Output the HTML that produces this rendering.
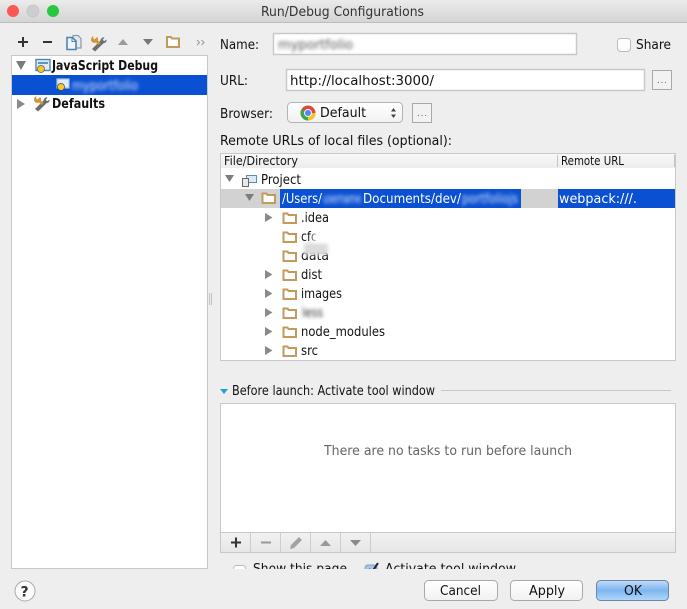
<!DOCTYPE html>
<html><head><meta charset="utf-8"><style>
html,body{margin:0;padding:0;background:#eeeeee;width:687px;height:609px;overflow:hidden}
svg{display:block;filter:blur(.3px)}
text{font-family:"DejaVu Sans","Liberation Sans",sans-serif;font-size:13px;fill:#111}
</style></head><body>
<svg width="687" height="609" viewBox="0 0 687 609" xmlns="http://www.w3.org/2000/svg">
<defs>
<linearGradient id="tb" x1="0" y1="0" x2="0" y2="1"><stop offset="0" stop-color="#ebebeb"/><stop offset="1" stop-color="#d4d4d4"/></linearGradient>
<linearGradient id="btn" x1="0" y1="0" x2="0" y2="1"><stop offset="0" stop-color="#ffffff"/><stop offset="1" stop-color="#f1f1f1"/></linearGradient>
<linearGradient id="ok" x1="0" y1="0" x2="0" y2="1"><stop offset="0" stop-color="#c4dcf7"/><stop offset=".5" stop-color="#7db5f0"/><stop offset="1" stop-color="#b4d8fa"/></linearGradient>
<linearGradient id="hd" x1="0" y1="0" x2="0" y2="1"><stop offset="0" stop-color="#f8f8f8"/><stop offset="1" stop-color="#ececec"/></linearGradient>
<linearGradient id="ft" x1="0" y1="0" x2="0" y2="1"><stop offset="0" stop-color="#f2f2f2"/><stop offset="1" stop-color="#e6e6e6"/></linearGradient>
<filter id="b1" x="-20%" y="-60%" width="140%" height="220%"><feGaussianBlur stdDeviation="1.800"/></filter>
<clipPath id="cl"><rect x="220" y="555" width="320" height="14"/></clipPath>
<g id="fd"><path d="M1.500 2.500h4l1 1.500h7.500v8H1.500z" fill="#fff" stroke="#c49a5c" stroke-width="2"/></g>
<g id="wr"><path d="M14.500 2.500l-1.800 2.300 1.500 1.500 2.300-1.800c.3 1.800-.6 3.400-2.800 3.600L5 16.500 2 14l8.500-8.500c.2-2 2-3.500 4-3z" fill="#6e6e6e"/>
<path d="M3.500 1a3.800 3.800 0 0 0-2 5.500 3.800 3.800 0 0 0 4.500 1l2.500 2.500 2-2-2.500-2.500a3.800 3.800 0 0 0-1-3.500L4.500 4.500 3 3z" fill="#d4953a"/></g>
</defs>

<rect width="687" height="609" fill="#eeeeee"/>
<!-- title bar -->
<rect width="687" height="22" fill="url(#tb)"/>
<rect y="22" width="687" height="1" fill="#bdbdbd"/>
<circle cx="13" cy="11" r="6" fill="#fc5753"/>
<circle cx="33" cy="11" r="6" fill="#cecece" stroke="#bfbfbf" stroke-width=".6"/>
<circle cx="53" cy="11" r="6" fill="#27c83f"/>
<text x="261" y="16" textLength="163" lengthAdjust="spacingAndGlyphs" style="fill:#333">Run/Debug Configurations</text>

<!-- left toolbar -->
<path d="M18 42h10M23 37v10M43 42h9" stroke="#333" stroke-width="2" fill="none"/>
<path d="M73 35.500h5l3 3v9.500h-8z" fill="#e6e9ec" stroke="#8c9aa6" stroke-width="1.200"/>
<path d="M67 37.500h5.500l3.500 3.500v8.500h-9z" fill="#eef4f9" stroke="#4f86ad" stroke-width="1.600"/>
<path d="M72 37.500v4h4" fill="none" stroke="#4f86ad" stroke-width="1"/>
<use href="#wr" x="90" y="35"/>
<path d="M118 45l5-6 5 6z" fill="#9b9b9b"/>
<path d="M143 39h10l-5 6z" fill="#777"/>
<path d="M167 37h4l1 1.500h7v8.500h-12z" fill="#fff" stroke="#c49a5c" stroke-width="2"/>
<path d="M197 40l2.500 2.500-2.500 2.500M201.500 40l2.500 2.500-2.500 2.500" stroke="#999" fill="none" stroke-width="1"/>

<!-- left list -->
<rect x="11.500" y="55.500" width="196" height="513" fill="#fff" stroke="#c8c8c8"/>
<rect x="12" y="75" width="195" height="20" fill="#0a50d2"/>
<path d="M16 61h10l-5 9z" fill="#7c7c7c"/>
<path d="M17 99v10l8-5z" fill="#8a8a8a"/>
<!-- JS icon -->
<rect x="36" y="59.500" width="14" height="11" fill="#dfeaf5" stroke="#4f86ad" stroke-width="1.400"/>
<rect x="38" y="62" width="10" height="2" fill="#5c93c0"/>
<circle cx="41" cy="69" r="3.500" fill="#f4c92e" stroke="#555" stroke-width=".7"/>
<text x="52" y="70" textLength="106" lengthAdjust="spacingAndGlyphs" font-weight="700">JavaScript Debug</text>
<rect x="57" y="79" width="12" height="9" fill="#dfeaf5" stroke="#a9c4de" stroke-width="1.200"/>
<circle cx="61" cy="87" r="3.500" fill="#f4c92e" stroke="#444" stroke-width=".7"/>
<text x="72" y="90" textLength="66" lengthAdjust="spacingAndGlyphs" style="fill:#dbe6fa" filter="url(#b1)">myportfolio</text>
<!-- wrench -->
<use href="#wr" x="33" y="95"/>
<text x="52" y="108" textLength="53" lengthAdjust="spacingAndGlyphs" font-weight="700">Defaults</text>

<!-- splitter -->
<g fill="#c2c2c2"><rect x="209" y="293" width="1" height="12"/><rect x="211" y="293" width="1" height="12"/></g>

<!-- name -->
<text x="220" y="49" textLength="39" lengthAdjust="spacingAndGlyphs">Name:</text>
<rect x="273.500" y="33.500" width="303" height="21" fill="#fff" stroke="#c9c9c9" stroke-width="1.500"/>
<text x="278" y="49" textLength="75" lengthAdjust="spacingAndGlyphs" style="fill:#555" filter="url(#b1)">myportfolio</text>
<rect x="617.500" y="38.500" width="13" height="13" rx="3" fill="#fdfdfd" stroke="#bcbcbc"/>
<text x="636" y="49" textLength="35" lengthAdjust="spacingAndGlyphs">Share</text>

<!-- url -->
<text x="220" y="85" textLength="28" lengthAdjust="spacingAndGlyphs">URL:</text>
<rect x="286.500" y="69.500" width="358" height="21" fill="#fff" stroke="#c9c9c9" stroke-width="1.500"/>
<text x="290" y="85" textLength="144" lengthAdjust="spacingAndGlyphs">http://localhost:3000/</text>
<rect x="652.500" y="70.500" width="19" height="19" fill="#f2f2f2" stroke="#a8a8a8"/>
<text x="657" y="83" style="font-size:9px;fill:#666" textLength="10">...</text>

<!-- browser -->
<text x="220" y="118" textLength="53" lengthAdjust="spacingAndGlyphs">Browser:</text>
<rect x="287.500" y="102.500" width="115" height="20" rx="4" fill="url(#btn)" stroke="#b4b4b4"/>
<circle cx="308" cy="113" r="7.500" fill="#dd4b3e"/>
<path d="M308 113l-6.500 3.800a7.500 7.500 0 0 1 0-7.600z" fill="#3aa757"/>
<path d="M301.500 116.800A7.500 7.500 0 0 0 308 120.500l3.800-7.500z" fill="#3aa757"/>
<path d="M308 113h7.500A7.500 7.500 0 0 1 308 120.500z" fill="#f5c518"/>
<circle cx="308" cy="113" r="3.500" fill="#4a8af4" stroke="#f2f2f2"/>
<text x="320" y="117" textLength="46" lengthAdjust="spacingAndGlyphs">Default</text>
<path d="M391 111.500l2.500-3.500 2.500 3.500zM391 114.500l2.500 3.500 2.500-3.500z" fill="#444"/>
<rect x="412.500" y="103.500" width="19" height="19" fill="#f2f2f2" stroke="#a8a8a8"/>
<text x="417" y="116" style="font-size:9px;fill:#666" textLength="10">...</text>

<text x="220" y="145" textLength="232" lengthAdjust="spacingAndGlyphs">Remote URLs of local files (optional):</text>

<!-- table -->
<rect x="220.500" y="153.500" width="455" height="207" fill="#fff" stroke="#c8c8c8"/>
<rect x="221" y="154" width="454" height="14" fill="url(#hd)"/>
<rect x="557" y="155" width="1" height="12" fill="#c4c4c4"/>
<rect x="674" y="155" width="1" height="12" fill="#c4c4c4"/>
<text x="224" y="165" textLength="74" lengthAdjust="spacingAndGlyphs" style="font-size:12px">File/Directory</text>
<text x="561" y="165" textLength="63" lengthAdjust="spacingAndGlyphs" style="font-size:12px">Remote URL</text>

<path d="M225 175h9l-4.500 7z" fill="#7c7c7c"/>
<rect x="246.500" y="175.500" width="10" height="7" fill="#dfeaf5" stroke="#5c8fb5"/>
<rect x="242.500" y="178.500" width="6" height="8" fill="#e8e8e8" stroke="#666"/>
<text x="261" y="184" textLength="40" lengthAdjust="spacingAndGlyphs">Project</text>

<rect x="221" y="189" width="454" height="19" fill="#d2d2d2"/>
<rect x="280" y="189" width="241" height="19" fill="#0a50d2"/>
<rect x="558" y="189" width="117" height="19" fill="#0a50d2"/>
<path d="M245 194h9l-4.500 7z" fill="#7c7c7c"/>
<use href="#fd" x="261" y="191"/>
<text x="282" y="203" textLength="40" lengthAdjust="spacingAndGlyphs" style="fill:#fff">/Users/</text>
<text x="323" y="203" textLength="38" lengthAdjust="spacingAndGlyphs" style="fill:#dbe6fa" filter="url(#b1)">username</text>
<text x="363" y="203" textLength="98" lengthAdjust="spacingAndGlyphs" style="fill:#fff">Documents/dev/</text>
<text x="462" y="203" textLength="56" lengthAdjust="spacingAndGlyphs" style="fill:#dbe6fa" filter="url(#b1)">portfoliojs</text>
<text x="559" y="203" textLength="78" lengthAdjust="spacingAndGlyphs" style="fill:#fff">webpack:///.</text>

<g fill="#8a8a8a">
<path d="M265 213v9l7.500-4.500z"/><path d="M265 270v9l7.500-4.500z"/><path d="M265 289v9l7.500-4.500z"/><path d="M265 308v9l7.500-4.500z"/><path d="M265 327v9l7.500-4.500z"/><path d="M265 346v9l7.500-4.500z"/>
</g>
<use href="#fd" x="282" y="211"/>
<use href="#fd" x="282" y="230"/>
<use href="#fd" x="282" y="249"/>
<use href="#fd" x="282" y="268"/>
<use href="#fd" x="282" y="287"/>
<use href="#fd" x="282" y="306"/>
<use href="#fd" x="282" y="325"/>
<use href="#fd" x="282" y="344"/>
<text x="301" y="222" textLength="28" lengthAdjust="spacingAndGlyphs">.idea</text>
<text x="301" y="241" textLength="16" lengthAdjust="spacingAndGlyphs">cfc</text>
<text x="301" y="260" textLength="28" lengthAdjust="spacingAndGlyphs">data</text>
<rect x="304" y="243" width="24" height="12" fill="#dcdcdc" filter="url(#b1)"/>
<rect x="313" y="233" width="16" height="9" fill="#fff" filter="url(#b1)"/>
<text x="301" y="279" textLength="21" lengthAdjust="spacingAndGlyphs">dist</text>
<text x="301" y="298" textLength="41" lengthAdjust="spacingAndGlyphs">images</text>
<text x="302" y="317" textLength="21" lengthAdjust="spacingAndGlyphs" style="fill:#333" filter="url(#b1)">less</text>
<text x="301" y="336" textLength="84" lengthAdjust="spacingAndGlyphs">node_modules</text>
<text x="301" y="355" textLength="17" lengthAdjust="spacingAndGlyphs">src</text>

<!-- before launch -->
<path d="M220 389h8l-4 5z" fill="#2d9cd8"/>
<text x="232" y="395" textLength="203" lengthAdjust="spacingAndGlyphs">Before launch: Activate tool window</text>
<rect x="441" y="390" width="230" height="1" fill="#c8c8c8"/>
<rect x="220.500" y="403.500" width="455" height="149" fill="#fff" stroke="#c8c8c8"/>
<text x="324" y="455" textLength="248" lengthAdjust="spacingAndGlyphs" style="fill:#666">There are no tasks to run before launch</text>
<rect x="221" y="532" width="454" height="20" fill="url(#ft)"/>
<rect x="221" y="532" width="454" height="1" fill="#c8c8c8"/>
<g fill="#cdcdcd"><rect x="250" y="533" width="1" height="19"/><rect x="280" y="533" width="1" height="19"/><rect x="310" y="533" width="1" height="19"/><rect x="340" y="533" width="1" height="19"/><rect x="370" y="533" width="1" height="19"/></g>
<path d="M231 542.500h10M236 537.500v10" stroke="#333" stroke-width="2" fill="none"/>
<path d="M261 542.500h10" stroke="#999" stroke-width="2" fill="none"/>
<path d="M290 549l1-4 8-8 3 3-8 8z" fill="#a2a2a2"/>
<path d="M320 546l5.500-6 5.500 6z" fill="#999"/>
<path d="M350 540h11l-5.500 6z" fill="#8a8a8a"/>

<!-- clipped checkboxes -->
<g clip-path="url(#cl)">
<rect x="233.500" y="565.500" width="12" height="12" rx="3" fill="#fff" stroke="#bcbcbc"/>
<text x="253" y="573" textLength="94" lengthAdjust="spacingAndGlyphs">Show this page</text>
<rect x="365" y="565" width="12" height="12" rx="3" fill="#a9c6ea" stroke="#7f9cc0"/>
<path d="M369 569l3 3 6-9" stroke="#223" stroke-width="2" fill="none"/>
<text x="385" y="573" textLength="131" lengthAdjust="spacingAndGlyphs">Activate tool window</text>
</g>

<!-- help -->
<circle cx="25" cy="591" r="10" fill="#fbfbfb" stroke="#a9a9a9"/>
<text x="20.500" y="596.500" style="font-size:14px;font-weight:700;fill:#333">?</text>

<!-- buttons -->
<rect x="424.500" y="580.500" width="73" height="20" rx="4" fill="url(#btn)" stroke="#a9a9a9"/>
<text x="440" y="595" textLength="41" lengthAdjust="spacingAndGlyphs">Cancel</text>
<rect x="510.500" y="580.500" width="72" height="20" rx="4" fill="url(#btn)" stroke="#a9a9a9"/>
<text x="529" y="595" textLength="36" lengthAdjust="spacingAndGlyphs">Apply</text>
<rect x="596.500" y="580.500" width="72" height="20" rx="4" fill="url(#ok)" stroke="#6c86a8"/>
<text x="624" y="595" textLength="18" lengthAdjust="spacingAndGlyphs">OK</text>
</svg>
</body></html>
